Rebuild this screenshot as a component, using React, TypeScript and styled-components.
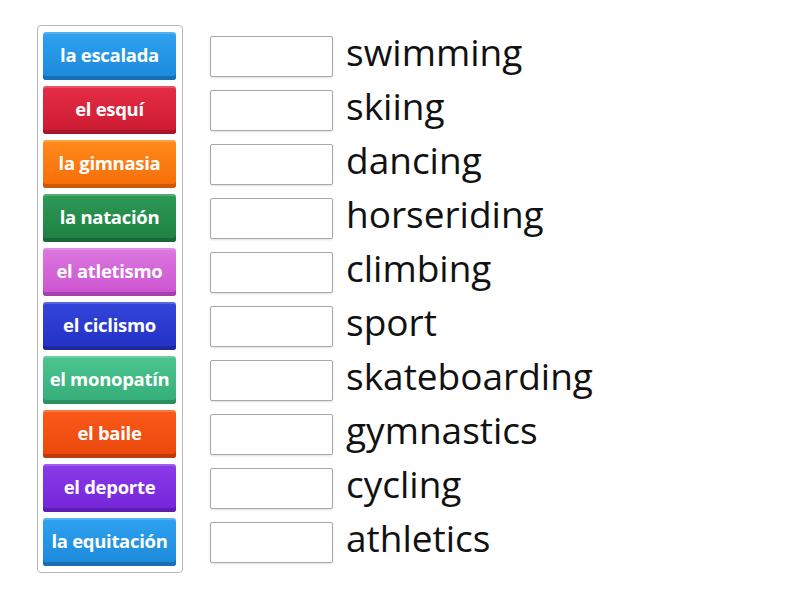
import React from 'react'
import styled, { createGlobalStyle } from 'styled-components'

const GlobalStyle = createGlobalStyle`
  body {
    margin: 0;
    background: #ffffff;
    font-family: "Open Sans", "Liberation Sans", sans-serif;
  }
`

const tiles = [
  { label: 'la escalada', top: '#2fa2f0', bottom: '#1b88da', edge: '#166fb4' },
  { label: 'el esquí', top: '#e42c45', bottom: '#cc1b32', edge: '#a8152a' },
  { label: 'la gimnasia', top: '#ff8a1c', bottom: '#f56d07', edge: '#cf5805' },
  { label: 'la natación', top: '#2c9a55', bottom: '#1f7f44', edge: '#196838' },
  { label: 'el atletismo', top: '#dc78e0', bottom: '#cb52cf', edge: '#a83dac' },
  { label: 'el ciclismo', top: '#3346db', bottom: '#2330c4', edge: '#1c27a0' },
  { label: 'el monopatín', top: '#4cc58f', bottom: '#35ad79', edge: '#2b8f63' },
  { label: 'el baile', top: '#fb5a1a', bottom: '#ea470b', edge: '#c23a08' },
  { label: 'el deporte', top: '#8a3ae8', bottom: '#7325d8', edge: '#5d1db3' },
  { label: 'la equitación', top: '#2fa2f0', bottom: '#1b88da', edge: '#166fb4' },
]

const words = [
  'swimming',
  'skiing',
  'dancing',
  'horseriding',
  'climbing',
  'sport',
  'skateboarding',
  'gymnastics',
  'cycling',
  'athletics',
]

const App = () => {
  return (
    <>
      <GlobalStyle />
      <Page>
        <Bank>
          {tiles.map((t) => (
            <Tile key={t.label} $top={t.top} $bottom={t.bottom} $edge={t.edge}>
              {t.label}
            </Tile>
          ))}
        </Bank>
        <Targets>
          {words.map((w) => (
            <Row key={w}>
              <Slot />
              <Word>{w}</Word>
            </Row>
          ))}
        </Targets>
      </Page>
    </>
  )
}

export default App

const Page = styled.div`
  display: flex;
  align-items: flex-start;
  padding: 25px 0 0 37px;
  gap: 27px;
`

const Bank = styled.div`
  width: 134px;
  padding: 6px 5px 6px 5px;
  border: 1px solid #b9b9b9;
  border-radius: 4px;
  display: flex;
  flex-direction: column;
  gap: 6px;
`

const Tile = styled.div<{ $top: string; $bottom: string; $edge: string }>`
  height: 48px;
  width: 133px;
  box-sizing: border-box;
  border-radius: 3px;
  background: linear-gradient(${(p) => p.$top}, ${(p) => p.$bottom});
  box-shadow: inset 0 -4px 0 ${(p) => p.$edge}, inset 0 2px 0 rgba(255, 255, 255, 0.18);
  color: #ffffff;
  font-weight: 700;
  font-size: 18.5px;
  letter-spacing: -0.3px;
  display: flex;
  align-items: center;
  justify-content: center;
  padding-bottom: 4px;
  white-space: nowrap;
`

const Targets = styled.div`
  display: flex;
  flex-direction: column;
  gap: 6px;
  padding-top: 7px;
`

const Row = styled.div`
  height: 48px;
  display: flex;
  align-items: center;
  gap: 13px;
`

const Slot = styled.div`
  width: 123px;
  height: 41px;
  box-sizing: border-box;
  border: 1px solid #a8a8a8;
  border-radius: 2px;
  background: #ffffff;
  box-shadow: 0 1px 2px rgba(0, 0, 0, 0.12);
`

const Word = styled.span`
  font-size: 37px;
  color: #111111;
  line-height: 1;
  padding-bottom: 9px;
`
